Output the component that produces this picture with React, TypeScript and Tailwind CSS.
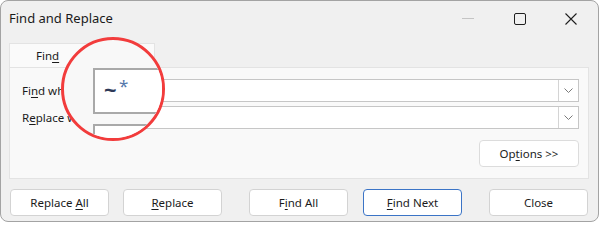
import type { ReactNode } from 'react'

const font = { fontFamily: '"Segoe UI", "Noto Sans", "Open Sans", sans-serif' }

function U({ children }: { children: ReactNode }) {
  return <span className="underline underline-offset-2">{children}</span>
}

function Btn({ children, className = '' }: { children: ReactNode; className?: string }) {
  return (
    <button
      className={`flex h-[27px] w-[99px] items-center justify-center rounded-[4px] border bg-white text-[11.5px] text-[#1b1b1b] ${className}`}
    >
      <span className="whitespace-pre">{children}</span>
    </button>
  )
}

function Combo() {
  return (
    <div className="flex h-[23px] flex-1 border border-[#c6c6c6] bg-white">
      <div className="flex-1" />
      <div className="flex w-[20px] items-center justify-center border-l border-[#d4d4d4]">
        <svg width="9" height="5" viewBox="0 0 9 5">
          <path d="M0.5 0.5 L4.5 4.5 L8.5 0.5" fill="none" stroke="#7a7a7a" strokeWidth="1" />
        </svg>
      </div>
    </div>
  )
}

export default function App() {
  return (
    <div className="h-[225px] w-[600px] bg-white" style={font}>
      <div className="relative h-[222px] w-[599px] overflow-hidden rounded-[8px] border border-[#a3a3a3] bg-[#f0f0f0]">
        {/* title bar */}
        <div className="flex h-[35px] items-center">
          <span className="pl-[8px] text-[13px] text-[#1a1a1a]">Find and Replace</span>
          <div className="ml-auto flex items-center">
            <div className="flex w-[52px] justify-center">
              <div className="h-px w-[12px] bg-[#c4c4c4]" />
            </div>
            <div className="flex w-[52px] justify-center">
              <div className="h-[12px] w-[12px] rounded-[2px] border border-[#1f1f1f]" />
            </div>
            <div className="flex w-[52px] justify-center pr-[3px]">
              <svg width="12" height="12" viewBox="0 0 12 12">
                <path d="M0.5 0.5 L11.5 11.5 M11.5 0.5 L0.5 11.5" stroke="#1f1f1f" strokeWidth="1.1" />
              </svg>
            </div>
          </div>
        </div>

        <div className="px-[8px] pt-[7px]">
          {/* tab */}
          <div className="flex h-[24px] w-[146px] items-center border border-b-0 border-[#e3e3e3] bg-[#fafafa] pl-[26px] text-[11.5px] text-[#1b1b1b]">
            <span>
              Fin<U>d</U>
            </span>
          </div>
          {/* panel */}
          <div className="flex h-[112px] w-[580px] flex-col border border-[#e3e3e3] bg-[#f9f9f9] pl-[12px] pr-[9px] pt-[11px] text-[11.5px] text-[#1b1b1b]">
            <div className="flex items-center">
              <span className="w-[72px] shrink-0 whitespace-nowrap">
                Fi<U>n</U>d what:
              </span>
              <Combo />
            </div>
            <div className="mt-[4px] flex items-center">
              <span className="w-[72px] shrink-0 whitespace-nowrap">
                R<U>e</U>place with:
              </span>
              <Combo />
            </div>
            <div className="mt-[11px] flex justify-end">
              <Btn className="h-[25px] w-[100px] border-[#dcdcdc]">
                Op<U>t</U>ions &gt;&gt;
              </Btn>
            </div>
          </div>

          {/* bottom buttons */}
          <div className="mt-[10px] flex">
            <Btn className="ml-[1px] border-[#d3d3d3]">
              Replace <U>A</U>ll
            </Btn>
            <Btn className="ml-[14px] border-[#d3d3d3]">
              <U>R</U>eplace
            </Btn>
            <Btn className="ml-[27px] border-[#d3d3d3]">
              F<U>i</U>nd All
            </Btn>
            <Btn className="ml-[15px] border-[#3b74c6]">
              <U>F</U>ind Next
            </Btn>
            <Btn className="ml-[27px] border-[#d3d3d3]">Close</Btn>
          </div>
        </div>

        {/* magnifier */}
        <div className="absolute left-[60px] top-[36px] h-[104px] w-[104px] overflow-hidden rounded-full border-[3px] border-[#f23c3c] bg-[#f8f8f8]">
          <div className="absolute left-[29px] top-[28px] h-[46px] w-[120px] border-2 border-[#a9a9a9] bg-white" />
          <div className="absolute left-[29px] top-[84px] h-[46px] w-[120px] border-2 border-[#a9a9a9] bg-white" />
          <span className="absolute left-[40px] top-[38px] text-[22px] font-bold leading-none text-[#2e3a58]">~</span>
          <span className="absolute left-[55px] top-[37px] text-[17px] leading-none text-[#5577aa]">*</span>
        </div>
      </div>
    </div>
  )
}
